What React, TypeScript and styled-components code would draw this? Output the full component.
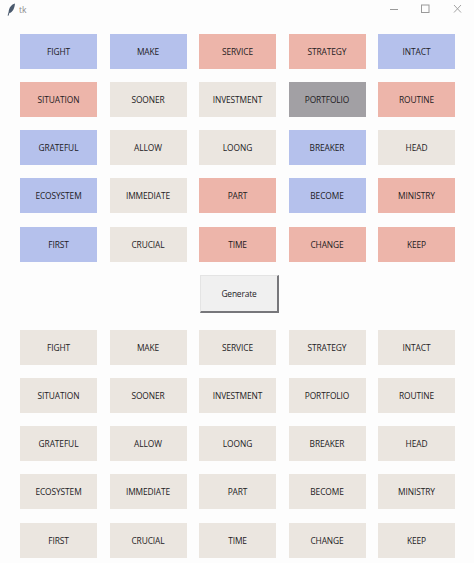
import styled, { createGlobalStyle } from "styled-components";

type Tone = "blue" | "red" | "plain" | "grey";

const words = [
  "FIGHT", "MAKE", "SERVICE", "STRATEGY", "INTACT",
  "SITUATION", "SOONER", "INVESTMENT", "PORTFOLIO", "ROUTINE",
  "GRATEFUL", "ALLOW", "LOONG", "BREAKER", "HEAD",
  "ECOSYSTEM", "IMMEDIATE", "PART", "BECOME", "MINISTRY",
  "FIRST", "CRUCIAL", "TIME", "CHANGE", "KEEP",
];

const tones: Tone[] = [
  "blue", "blue", "red", "red", "blue",
  "red", "plain", "plain", "grey", "red",
  "blue", "plain", "plain", "blue", "plain",
  "blue", "plain", "red", "blue", "red",
  "blue", "plain", "red", "red", "red",
];

const colors: Record<Tone, string> = {
  blue: "#b5c1ec",
  red: "#edb5aa",
  plain: "#ebe6e0",
  grey: "#a2a0a4",
};

function App() {
  return (
    <Window>
      <GlobalStyle />
      <TitleBar>
        <TitleLeft>
          <svg width="9" height="13" viewBox="0 0 9 13">
            <path d="M8 0.5C4.5 1.5 2 4.5 1.6 9L0.6 12.6L1.5 12.8L2.4 10C5.5 9.5 7.6 5.5 8 0.5Z" fill="#4a5a6e" />
          </svg>
          <Title>tk</Title>
        </TitleLeft>
        <Controls>
          <svg width="8" height="10" viewBox="0 0 8 10">
            <path d="M0 5.5H8" stroke="#9a9a9a" strokeWidth="1" />
          </svg>
          <svg width="9" height="10" viewBox="0 0 9 10">
            <rect x="0.5" y="1" width="7.5" height="7.5" fill="none" stroke="#9a9a9a" strokeWidth="1" />
          </svg>
          <svg width="9" height="10" viewBox="0 0 9 10">
            <path d="M1 1L8 8.5M8 1L1 8.5" stroke="#9a9a9a" strokeWidth="0.9" fill="none" />
          </svg>
        </Controls>
      </TitleBar>
      <Board>
        {words.map((word, i) => (
          <Card key={word} $tone={tones[i]}>{word}</Card>
        ))}
      </Board>
      <ButtonRow>
        <GenerateButton>Generate</GenerateButton>
      </ButtonRow>
      <Board>
        {words.map((word) => (
          <Card key={word} $tone="plain">{word}</Card>
        ))}
      </Board>
    </Window>
  );
}

export default App;

const GlobalStyle = createGlobalStyle`
  html, body {
    margin: 0;
    padding: 0;
    background: #fdfdfd;
  }
`;

const Window = styled.div`
  width: 474px;
  height: 563px;
  overflow: hidden;
  background: #fdfdfd;
  font-family: "Open Sans", "Noto Sans", sans-serif;
`;

const TitleBar = styled.div`
  display: flex;
  align-items: center;
  justify-content: space-between;
  height: 18px;
  padding: 0 12px 0 7px;
  margin-bottom: 16px;
`;

const TitleLeft = styled.div`
  display: flex;
  align-items: center;
  gap: 3px;
`;

const Title = styled.span`
  font-size: 8.5px;
  color: #8a8a8a;
`;

const Controls = styled.div`
  display: flex;
  align-items: center;
  gap: 23px;
`;

const Board = styled.div`
  display: grid;
  grid-template-columns: repeat(5, 77px);
  grid-auto-rows: 35px;
  column-gap: 12.5px;
  row-gap: 13.15px;
  padding-left: 20px;
`;

const Card = styled.div<{ $tone: Tone }>`
  display: flex;
  align-items: center;
  justify-content: center;
  background: ${(p) => colors[p.$tone]};
  color: #1d1b1e;
  font-size: 8.4px;
  letter-spacing: -0.1px;
`;

const ButtonRow = styled.div`
  display: flex;
  padding: 13.4px 0 17px 200px;
`;

const GenerateButton = styled.button`
  box-sizing: border-box;
  width: 79px;
  height: 38px;
  padding: 0;
  border: none;
  border-top: 1px solid #e4e4e4;
  border-left: 1px solid #e4e4e4;
  border-right: 2px solid #77777b;
  border-bottom: 2px solid #77777b;
  background: #f0f0f0;
  color: #1d1b1e;
  font-family: inherit;
  font-size: 8.4px;
  letter-spacing: -0.15px;
`;
